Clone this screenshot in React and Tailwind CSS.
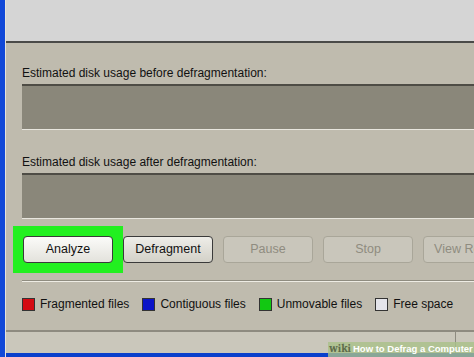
import React from 'react';

const font = { fontFamily: '"Liberation Sans", Tahoma, Arial, sans-serif' };

const Legend = ({ color, label, className = '' }) => (
  <div className={`flex shrink-0 items-center gap-[5px] ${className}`}>
    <span className={`w-[13px] h-[13px] border border-[#333] ${color}`} />
    <span>{label}</span>
  </div>
);

const Button = ({ children, disabled, className = '' }) => (
  <div
    className={`h-[27px] w-[90px] shrink-0 flex items-center justify-center rounded-[4px] border ${
      disabled
        ? 'border-[#a9a699] text-[#8f8c80] bg-[#c9c6bb]'
        : 'border-[#3a3a3a] text-[#111]'
    } ${className}`}
  >
    {children}
  </div>
);

export default function App() {
  return (
    <div className="relative w-[474px] h-[357px] overflow-hidden flex bg-[#0a3fcc] text-[12px] text-[#111] whitespace-nowrap" style={font}>
      <div className="w-[5px] shrink-0 bg-[#1148d8]" />
      <div className="flex-1 min-w-0 flex flex-col border-l border-[#e6e4dc]">
        <div className="h-[43px] bg-[#d5d5d5] border-b-2 border-[#4a4a48]" />
        <div className="flex-1 min-w-0 overflow-hidden bg-[#bfbbae] flex flex-col pl-[16px]">
          <div className="mt-[22px] h-[17px] leading-[17px]">Estimated disk usage before defragmentation:</div>
          <div className="mt-[2px] h-[46px] bg-[#8a877a] border-t-2 border-[#4e4c45] border-b border-b-[#e8e6de]" />
          <div className="mt-[24px] h-[17px] leading-[17px]">Estimated disk usage after defragmentation:</div>
          <div className="mt-[2px] h-[46px] bg-[#8a877a] border-t-2 border-[#4e4c45] border-b border-b-[#e8e6de]" />
          <div className="flex items-center mt-[7px] ml-[-9px] text-[12.5px]">
            <div className="shrink-0 bg-[#22f020] p-[10px]">
              <Button className="bg-gradient-to-b from-[#fbfbf9] to-[#e3e2dc]">Analyze</Button>
            </div>
            <Button className="w-[89px] bg-gradient-to-b from-[#eeede8] to-[#d3d1c8]">Defragment</Button>
            <Button disabled className="ml-[10px]">Pause</Button>
            <Button disabled className="ml-[10px]">Stop</Button>
            <Button disabled className="ml-[10px]">View Report</Button>
          </div>
          <div className="mt-[7px] h-[2px] border-t border-[#8f8c80] border-b border-b-[#eeece4]" />
          <div className="h-[44px] flex items-center text-[12px]">
            <Legend color="bg-[#d40a12]" label="Fragmented files" />
            <Legend color="bg-[#0a14c8]" label="Contiguous files" className="ml-[13px]" />
            <Legend color="bg-[#12c812]" label="Unmovable files" className="ml-[13px]" />
            <Legend color="bg-[#e4e4ea]" label="Free space" className="ml-[13px]" />
          </div>
        </div>
        <div className="h-[23px] bg-[#cac7bb] border-t-2 border-[#8e8b80] flex justify-end">
          <div className="w-[19px] border-l border-[#8e8b80]" />
        </div>
        <div className="h-[4px] bg-[#0a3fcc]" />
      </div>
      <div className="absolute right-0 bottom-0 h-[15px] w-[146px] bg-[#a9c08a]/80 flex items-center justify-center gap-[2px] text-[9.5px] font-bold text-white">
        <span className="text-[#5d6b4a] font-serif text-[11px]">wiki</span>
        <span>How to Defrag a Computer</span>
      </div>
    </div>
  );
}
